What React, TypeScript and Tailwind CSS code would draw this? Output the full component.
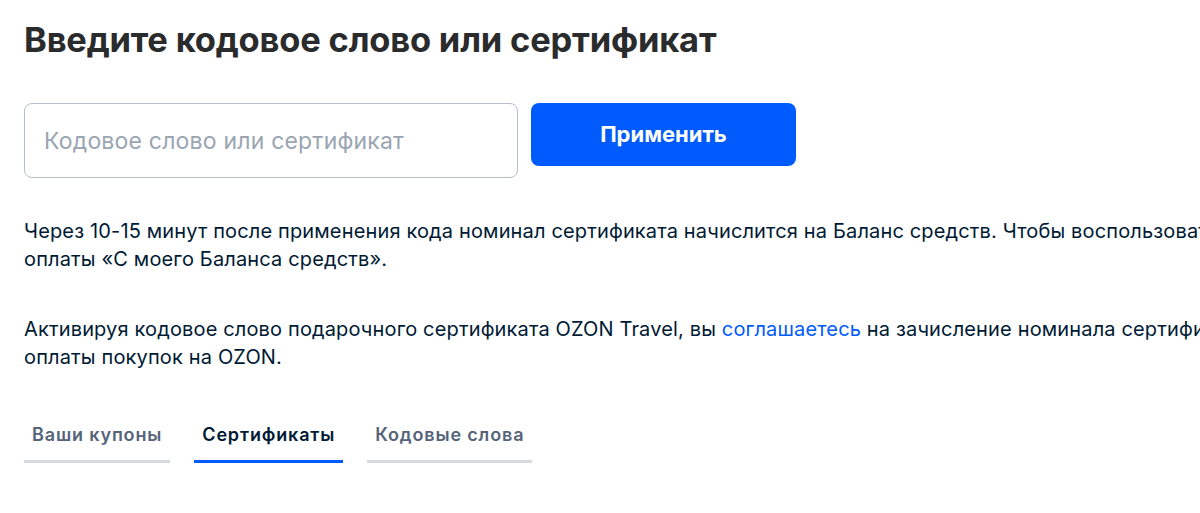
export default function App() {
  const tabs = [
    { label: "Ваши купоны", active: false },
    { label: "Сертификаты", active: true },
    { label: "Кодовые слова", active: false },
  ];

  return (
    <div className="w-full h-[513px] overflow-hidden bg-white px-6 pt-5 font-['Inter',sans-serif]">
      <h1 className="text-[34.5px] leading-10 font-bold text-[#2a2b2d] tracking-[-0.2px] whitespace-nowrap">
        Введите кодовое слово или сертификат
      </h1>

      {/* форма ввода кода */}
      <div className="mt-[43px] flex items-start gap-[13px]">
        <input
          type="text"
          placeholder="Кодовое слово или сертификат"
          className="w-[494px] h-[75px] rounded-lg border-[1.5px] border-[#b5bec9] px-[19px] text-[23px] tracking-[0.2px] text-[#001a34] outline-none placeholder:text-[#9aa5b2]"
        />
        <button className="w-[265px] h-[63px] rounded-lg bg-[#005bff] text-white text-[22px] font-bold">
          Применить
        </button>
      </div>

      <div className="mt-[39px] text-[20px] leading-[28px] tracking-[0.15px] text-[#001a34] whitespace-nowrap">
        <p>
          Через 10-15 минут после применения кода номинал сертификата начислится на Баланс средств. Чтобы воспользоваться им, выберите при оформлении заказа способ
          <br />
          оплаты «С моего Баланса средств».
        </p>
        <p className="mt-[42px]">
          Активируя кодовое слово подарочного сертификата OZON Travel, вы{" "}
          <a href="#" className="text-[#005bff]">соглашаетесь</a> на зачисление номинала сертификата на Баланс средств для
          <br />
          оплаты покупок на OZON.
        </p>
      </div>

      {/* табы */}
      <div className="mt-[52px] flex gap-6">
        {tabs.map((t) => (
          <div
            key={t.label}
            className={
              t.active
                ? "px-2 pb-[13px] border-b-[3px] border-[#005bff] text-[18px] leading-6 font-semibold tracking-[0.85px] text-[#001a34]"
                : "px-2 pb-[13px] border-b-[3px] border-[#d6dade] text-[18px] leading-6 font-semibold tracking-[0.85px] text-[#55647a]"
            }
          >
            {t.label}
          </div>
        ))}
      </div>
    </div>
  );
}
